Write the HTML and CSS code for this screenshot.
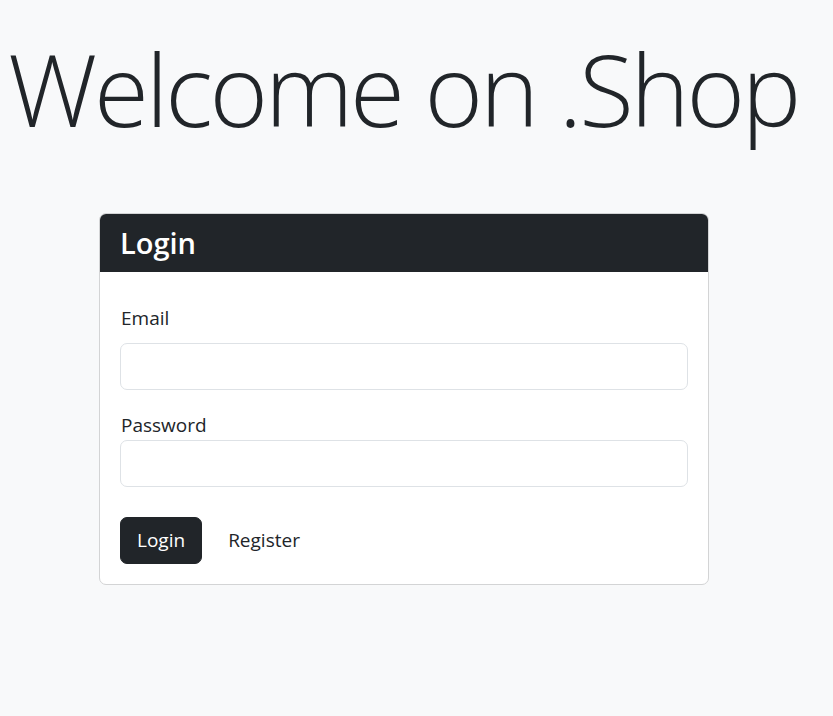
FILE: index.html
```html
<!DOCTYPE html>
<html lang="en">
<head>
<meta charset="utf-8">
<title>Welcome on .Shop</title>
<link rel="stylesheet" href="styles.css">
</head>
<body>
<main class="page">
  <h1 class="title">Welcome on .Shop</h1>
  <section class="card">
    <header class="card-header">
      <h2 class="card-title">Login</h2>
    </header>
    <form class="card-body">
      <div class="field field-email">
        <label class="label label-spaced" for="email">Email</label>
        <input class="input" id="email" type="email">
      </div>
      <div class="field">
        <label class="label" for="password">Password</label>
        <input class="input" id="password" type="password">
      </div>
      <div class="actions">
        <button class="btn btn-dark" type="button">Login</button>
        <a class="link" href="#">Register</a>
      </div>
    </form>
  </section>
</main>
</body>
</html>
```
FILE: styles.css
```css
* { box-sizing: border-box; }
html, body { margin: 0; padding: 0; }
body {
  background: #f8f9fa;
  color: #212529;
  font-family: "Open Sans", "Noto Sans", sans-serif;
  font-size: 20px;
  line-height: 1.5;
  width: 833px;
  height: 716px;
  overflow: hidden;
}
.page {
  display: flex;
  flex-direction: column;
  padding: 0 0 0 8px;
}
.title {
  margin: 0;
  font-weight: 300;
  font-size: 100px;
  line-height: 120px;
  padding-top: 28px;
  letter-spacing: -3.2px;
  white-space: nowrap;
}
.card {
  margin: 65px 0 0 91px;
  width: 610px;
  background: #fff;
  border: 1px solid #d3d4d5;
  border-radius: 7px;
  overflow: hidden;
}
.card-header {
  background: #212529;
  color: #fff;
  padding: 11px 20px 10px 21px;
  height: 59px;
  margin: -1px -1px 0;
}
.card-title {
  margin: 0;
  font-size: 29px;
  line-height: 38px;
  font-weight: 600;
}
.card-body {
  padding: 31px 20px 20px;
  display: flex;
  flex-direction: column;
}
.field {
  display: flex;
  flex-direction: column;
  margin-bottom: 20px;
}
.label {
  display: block;
  line-height: 30px;
  font-size: 19px;
  padding-left: 1px;
}
.label-spaced { margin-bottom: 10px; }
.input {
  display: block;
  width: 100%;
  height: 47px;
  border: 1px solid #dee2e6;
  border-radius: 7px;
  background: #fff;
  font: inherit;
  padding: 7px 15px;
}
.actions {
  display: flex;
  align-items: center;
  gap: 26px;
  padding-top: 10px;
}
.btn {
  font: inherit;
  font-size: 19px;
  height: 47px;
  padding: 0 16px;
  border-radius: 7px;
  border: 1px solid #212529;
  background: #212529;
  color: #fff;
  line-height: 1;
}
.link {
  color: #212529;
  text-decoration: none;
  font-size: 19px;
}
```
